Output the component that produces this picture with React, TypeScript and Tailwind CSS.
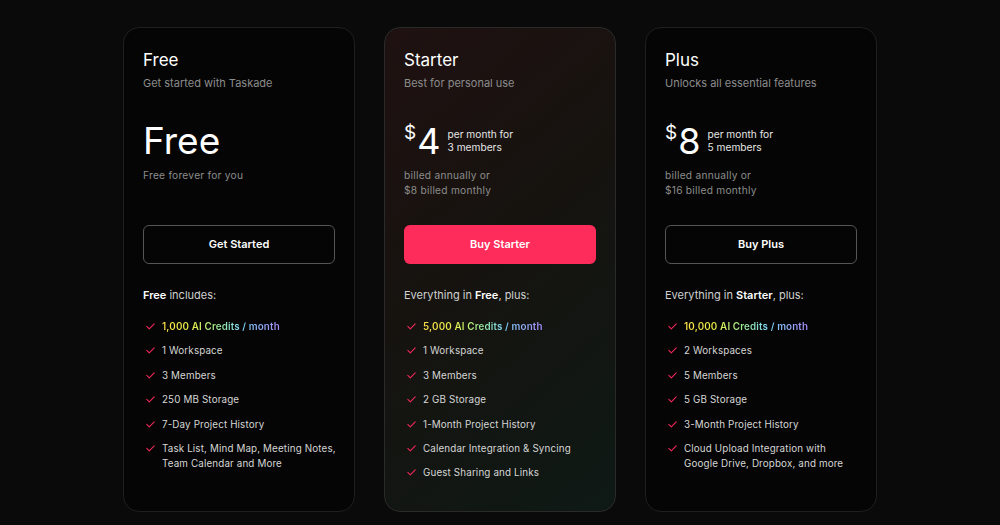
import type { ReactNode } from 'react'

type Plan = {
  name: string
  tagline: string
  price: string | null
  perLine1?: string
  perLine2?: string
  billing: string[]
  cta: string
  highlight?: boolean
  includes: ReactNode
  credits: string
  features: string[][]
}

const plans: Plan[] = [
  {
    name: 'Free',
    tagline: 'Get started with Taskade',
    price: null,
    billing: ['Free forever for you'],
    cta: 'Get Started',
    includes: (
      <>
        <span className="font-semibold text-white">Free</span> includes:
      </>
    ),
    credits: '1,000',
    features: [
      ['1 Workspace'],
      ['3 Members'],
      ['250 MB Storage'],
      ['7-Day Project History'],
      ['Task List, Mind Map, Meeting Notes,', 'Team Calendar and More'],
    ],
  },
  {
    name: 'Starter',
    tagline: 'Best for personal use',
    price: '4',
    perLine1: 'per month for',
    perLine2: '3 members',
    billing: ['billed annually or', '$8 billed monthly'],
    cta: 'Buy Starter',
    highlight: true,
    includes: (
      <>
        Everything in <span className="font-semibold text-white">Free</span>, plus:
      </>
    ),
    credits: '5,000',
    features: [
      ['1 Workspace'],
      ['3 Members'],
      ['2 GB Storage'],
      ['1-Month Project History'],
      ['Calendar Integration & Syncing'],
      ['Guest Sharing and Links'],
    ],
  },
  {
    name: 'Plus',
    tagline: 'Unlocks all essential features',
    price: '8',
    perLine1: 'per month for',
    perLine2: '5 members',
    billing: ['billed annually or', '$16 billed monthly'],
    cta: 'Buy Plus',
    includes: (
      <>
        Everything in <span className="font-semibold text-white">Starter</span>, plus:
      </>
    ),
    credits: '10,000',
    features: [
      ['2 Workspaces'],
      ['5 Members'],
      ['5 GB Storage'],
      ['3-Month Project History'],
      ['Cloud Upload Integration with', 'Google Drive, Dropbox, and more'],
    ],
  },
]

function Check() {
  return (
    <svg width="9" height="7" viewBox="0 0 9 7" fill="none" className="mt-[4px] shrink-0">
      <path d="M0.8 3.4 L3.3 5.8 L8.2 0.8" stroke="#f0285a" strokeWidth="1.1" strokeLinecap="round" strokeLinejoin="round" />
    </svg>
  )
}

function PlanCard({ plan }: { plan: Plan }) {
  return (
    <div
      className={
        plan.highlight
          ? 'w-[232px] h-[485px] rounded-[16px] border border-[#2a2a2a] bg-[linear-gradient(140deg,#1f1111_0%,#16130f_45%,#0e1915_100%)] px-[19px] pt-[20px]'
          : 'w-[232px] h-[485px] rounded-[16px] border border-[#1f1f1f] bg-[#050505] px-[19px] pt-[20px]'
      }
    >
      <h3 className="text-[17px] leading-[24px] text-white">{plan.name}</h3>
      <p className="mt-[3px] text-[11px] leading-[16px] text-[#8c8c8c]">{plan.tagline}</p>

      <div className="mt-[30px] h-[40px] flex items-center">
        {plan.price === null ? (
          <span className="text-[37px] leading-[40px] text-white">Free</span>
        ) : (
          <div className="flex items-center">
            <span className="self-start mt-[2px] text-[19px] leading-[20px] text-white">$</span>
            <span className="ml-[1px] text-[36px] leading-[40px] text-white">{plan.price}</span>
            <div className="ml-[7px] text-[10.2px] leading-[13px] text-[#e5e5e5]">
              <div>{plan.perLine1}</div>
              <div>{plan.perLine2}</div>
            </div>
          </div>
        )}
      </div>

      <div className="mt-[7px] h-[30px] text-[10.2px] leading-[15px] tracking-[0.25px] text-[#8c8c8c]">
        {plan.billing.map((b) => (
          <div key={b}>{b}</div>
        ))}
      </div>

      <button
        className={
          plan.highlight
            ? 'mt-[27px] h-[39px] w-full rounded-[6px] bg-[#fe2c5b] text-[11px] font-semibold text-white'
            : 'mt-[27px] h-[39px] w-full rounded-[6px] border border-[#555555] bg-transparent text-[11px] font-semibold text-white'
        }
      >
        {plan.cta}
      </button>

      <p className="mt-[23px] text-[11px] leading-[16px] text-[#d0d0d0]">{plan.includes}</p>

      <ul className="mt-[16px] flex flex-col gap-[9.4px]">
        <li className="flex gap-[7px] pl-[3px] text-[9.8px] leading-[15px] tracking-[0.15px]">
          <Check />
          <span className="font-semibold bg-[linear-gradient(90deg,#fde047_0%,#e8ef4a_25%,#9cf09a_48%,#7dd3fc_68%,#a78bfa_100%)] bg-clip-text text-transparent">
            {plan.credits} AI Credits / month
          </span>
        </li>
        {plan.features.map((f) => (
          <li key={f[0]} className="flex gap-[7px] pl-[3px] text-[9.8px] leading-[15px] tracking-[0.15px] text-[#d6d6d6]">
            <Check />
            <span>
              {f.map((line) => (
                <span key={line} className="block whitespace-nowrap">
                  {line}
                </span>
              ))}
            </span>
          </li>
        ))}
      </ul>
    </div>
  )
}

export default function App() {
  return (
    <div className="min-h-screen w-full bg-[#0a0a0a] pt-[27px]" style={{ fontFamily: 'Inter, "Open Sans", sans-serif' }}>
      <div className="flex justify-center gap-[29px]">
        {plans.map((p) => (
          <PlanCard key={p.name} plan={p} />
        ))}
      </div>
    </div>
  )
}
